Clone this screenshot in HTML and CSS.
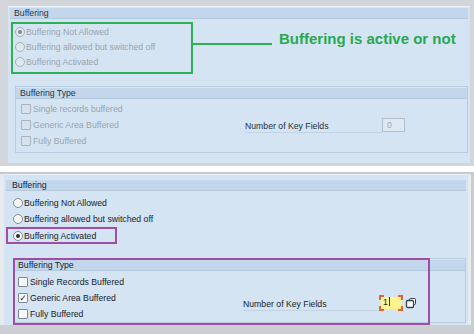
FILE: index.html
```html
<!DOCTYPE html>
<html lang="en">
<head>
  <meta charset="UTF-8">
  <meta name="viewport" content="width=device-width, initial-scale=1.0">
  <title>Buffering settings</title>
  <link rel="stylesheet" href="styles.css">
</head>
<body>
<!-- before: buffering switched off, everything greyed -->
<div class="frame frame-top">
  <div class="panel disabled">
    <div class="bar">Buffering</div>
    <div class="note-row">
      <div class="radios note-box">
        <div class="opt"><span class="radio on"></span>Buffering Not Allowed</div>
        <div class="opt"><span class="radio"></span>Buffering allowed but switched off</div>
        <div class="opt"><span class="radio"></span>Buffering Activated</div>
      </div>
      <div class="note-line"></div>
      <div class="note-text">Buffering is active or not</div>
    </div>
    <div class="subbox">
      <div class="bar">Buffering Type</div>
      <div class="subbody">
        <div class="checks">
          <div class="opt"><span class="check"></span>Single records buffered</div>
          <div class="opt"><span class="check"></span>Generic Area Buffered</div>
          <div class="opt"><span class="check"></span>Fully Buffered</div>
        </div>
        <div class="keyfield">
          <span class="keylabel">Number of Key Fields</span>
          <span class="keyinput">0</span>
        </div>
      </div>
    </div>
  </div>
</div>

<!-- after: buffering activated, generic area -->
<div class="frame frame-bottom">
  <div class="panel active">
    <div class="bar">Buffering</div>
    <div class="radios">
      <div class="opt"><span class="radio"></span>Buffering Not Allowed</div>
      <div class="opt"><span class="radio"></span>Buffering allowed but switched off</div>
      <div class="opt mark"><span class="radio on"></span>Buffering Activated</div>
    </div>
    <div class="subbox">
      <div class="bar">Buffering Type</div>
      <div class="subbody">
        <div class="checks">
          <div class="opt"><span class="check"></span>Single Records Buffered</div>
          <div class="opt"><span class="check on">&#10003;</span>Generic Area Buffered</div>
          <div class="opt"><span class="check"></span>Fully Buffered</div>
        </div>
        <div class="keyfield">
          <span class="keylabel">Number of Key Fields</span>
          <span class="keyinput edit">1<span class="caret"></span></span>
          <svg class="f4" width="12" height="12" viewBox="0 0 12 12">
            <rect x="4.5" y="1.5" width="6" height="6" rx="1" fill="#fff" stroke="#3a3f45"/>
            <rect x="1.5" y="3.5" width="7" height="7" rx="1.2" fill="#fff" stroke="#3a3f45" stroke-width="1.3"/>
          </svg>
        </div>
      </div>
      <div class="mark-box"></div>
    </div>
  </div>
</div>
</body>
</html>
```

FILE: styles.css
```css
body {
  margin: 0;
  width: 474px;
  height: 334px;
  overflow: hidden;
  background: #fff;
  font-family: "Liberation Sans", Arial, sans-serif;
  font-size: 8.7px;
  color: #18212b;
}

.frame { box-sizing: border-box; }
.frame-top {
  height: 166px;
  background: #d2d6da;
  padding: 6px 4px 3px 8px;
}
.frame-bottom {
  height: 162px;
  margin-top: 6px;
  background: #e8ebee;
  border-top: 2px solid #c6cacf;
  border-right: 3px solid #c9cdd1;
  border-bottom: 9px solid #cbcfd3;
  padding: 0 3px 0 4px;
}
.frame-bottom .panel { height: 151px; }

.panel {
  height: 157px;
  background: #d4e4f3;
  border-top: 1px solid #eaf1f8;
  box-sizing: border-box;
}

.bar {
  height: 10px;
  line-height: 10px;
  margin: 0 2px;
  padding-left: 4px;
  background: #c2d7eb;
  border-top: 1px solid #d9e7f4;
  border-bottom: 1px solid #b4c8dc;
}
.disabled .bar { color: #2a3440; }

.opt {
  display: flex;
  align-items: center;
  height: 15px;
  white-space: nowrap;
}
.disabled .opt { color: #9aa4ae; }

.radio {
  width: 8px;
  height: 8px;
  border-radius: 50%;
  border: 1px solid #7f8b97;
  background: #f6f9fc;
  margin-right: 1px;
  display: flex;
  align-items: center;
  justify-content: center;
  flex: none;
}
.radio.on::after {
  content: "";
  width: 4px;
  height: 4px;
  border-radius: 50%;
  background: #2b3138;
}
.disabled .radio { border-color: #a9b2bb; background: #dfe8f1; }
.disabled .radio.on::after { background: #7d8893; }

.check {
  width: 8px;
  height: 8px;
  border: 1px solid #7f8a96;
  border-radius: 1px;
  background: #f7f9fb;
  margin-right: 2px;
  flex: none;
  font-size: 9px;
  line-height: 8px;
  text-align: center;
  color: #20262c;
  font-family: "DejaVu Sans", sans-serif;
}
.disabled .check { border-color: #aab3bc; background: #d8e2ec; }

/* green note */
.note-row {
  display: flex;
  align-items: flex-start;
  margin: 3px 0 0 3px;
}
.note-box {
  box-sizing: border-box;
  width: 182px;
  height: 52px;
  border: 2px solid #2db157;
  padding-left: 2px;
}
.note-line {
  width: 79px;
  height: 2px;
  margin-top: 21px;
  background: #2db157;
}
.note-text {
  margin: 8px 0 0 7px;
  font-size: 15px;
  line-height: 18px;
  font-weight: bold;
  color: #27a94f;
}

/* buffering type group */
.subbox {
  position: relative;
  box-sizing: border-box;
  margin: 12px 2px 0 7px;
  height: 67px;
  border: 1px solid #b9cce0;
}
.subbox .bar { margin: 0; }
.subbody {
  display: flex;
  padding: 2px 0 0 5px;
}
.subbody .opt { height: 16px; }
.checks { width: 224px; flex: none; }

.keyfield {
  display: flex;
  align-items: flex-start;
  margin-top: 17px;
}
.keylabel {
  box-sizing: border-box;
  width: 137px;
  height: 15px;
  padding-top: 2px;
  line-height: 12px;
  border-bottom: 1px solid #c3d3e3;
}
.disabled .keylabel { color: #26303b; }
.keyinput {
  box-sizing: border-box;
  width: 23px;
  height: 14px;
  line-height: 12px;
  padding-left: 4px;
  border: 1px solid #b3c0ce;
  background: #dde8f3;
  color: #9aa4ae;
}

/* second panel */
.active .bar { margin-top: 4px; padding-left: 6px; }
.active .radios { margin-top: 4px; padding-left: 9px; }
.active .radios .opt { height: 16px; }
.active .opt.mark {
  box-sizing: border-box;
  height: 17px;
  width: 111px;
  margin-left: -7px;
  padding-left: 5px;
  border: 2px solid #a04da8;
}
.active .subbox {
  margin: 14px 2px 0 10px;
  height: 65px;
}
.active .subbox .bar { margin: 0; padding-left: 3px; }
.active .subbody { padding: 3px 0 0 3px; }
.active .checks { width: 225px; }
.active .keyfield { margin-top: 21px; }
.active .keylabel {
  width: 136px;
  height: 16px;
  padding-top: 3px;
}
.keyinput.edit {
  width: 24px;
  height: 16px;
  line-height: 14px;
  padding-left: 4px;
  border: none;
  color: #2a2a2a;
  background:
    linear-gradient(#e0662e, #e0662e) left top / 5px 2px no-repeat,
    linear-gradient(#e0662e, #e0662e) left top / 2px 5px no-repeat,
    linear-gradient(#e0662e, #e0662e) right top / 5px 2px no-repeat,
    linear-gradient(#e0662e, #e0662e) right top / 2px 5px no-repeat,
    linear-gradient(#e0662e, #e0662e) left bottom / 5px 2px no-repeat,
    linear-gradient(#e0662e, #e0662e) left bottom / 2px 5px no-repeat,
    linear-gradient(#e0662e, #e0662e) right bottom / 5px 2px no-repeat,
    linear-gradient(#e0662e, #e0662e) right bottom / 2px 5px no-repeat,
    linear-gradient(#fff38c, #fff38c) center / 20px 12px no-repeat;
}
.caret {
  display: inline-block;
  width: 1px;
  height: 9px;
  margin-left: 1px;
  vertical-align: -1px;
  background: #333;
}
.f4 { margin: 2px 0 0 2px; }

.mark-box {
  position: absolute;
  left: -2px;
  top: -1px;
  width: 417px;
  height: 67px;
  box-sizing: border-box;
  border: 2px solid #a04da8;
}
```
